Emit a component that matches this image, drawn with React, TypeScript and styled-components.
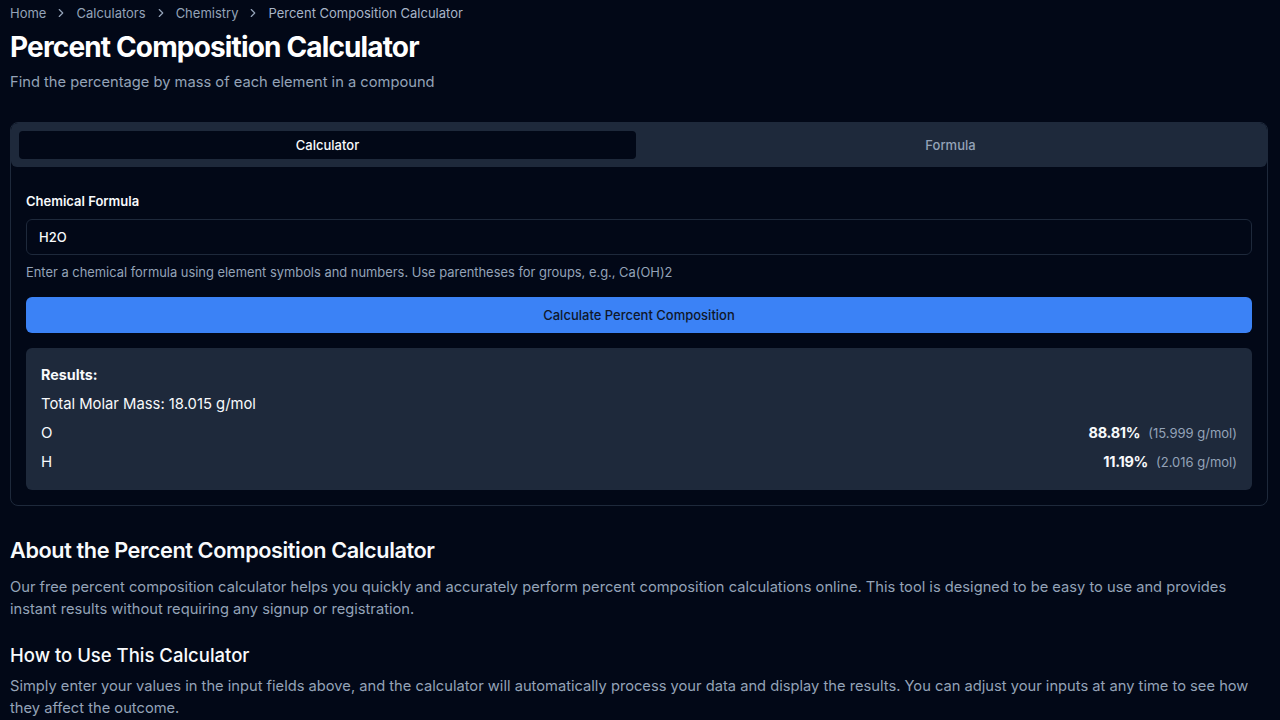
import styled, { createGlobalStyle } from 'styled-components';
import { ChevronRight } from 'lucide-react';

const GlobalStyle = createGlobalStyle`
  * { box-sizing: border-box; }
  body {
    margin: 0;
    background: #020817;
    color: #f8fafc;
    font-family: Inter, "Noto Sans", sans-serif;
  }
`;

const Page = styled.main`
  padding: 3px 12px 40px 10px;
`;

const Breadcrumb = styled.nav`
  display: flex;
  align-items: center;
  gap: 8px;
  font-size: 13px;
  line-height: 20px;
  color: #94a3b8;
`;

const Crumb = styled.span<{ $current?: boolean }>`
  color: ${(p) => (p.$current ? '#a8b5c8' : '#94a3b8')};
`;

const Sep = styled.span`
  display: inline-flex;
  color: #94a3b8;
`;

const Title = styled.h1`
  margin: 6px 0 0;
  font-size: 28px;
  line-height: 36px;
  font-weight: 700;
  letter-spacing: -0.85px;
  color: #fff;
`;

const Subtitle = styled.p`
  margin: 5px 0 0;
  font-size: 14.7px;
  line-height: 24px;
  color: #94a3b8;
`;

const Card = styled.section`
  margin-top: 28px;
  border: 1px solid #1e293b;
  border-radius: 8px;
  overflow: hidden;
`;

const TabList = styled.div`
  display: grid;
  grid-template-columns: 1fr 1fr;
  gap: 6px;
  padding: 8px;
  background: #1e293b;
  border-radius: 6px;
`;

const Tab = styled.button<{ $active?: boolean }>`
  height: 28px;
  border: 0;
  border-radius: 4px;
  font-family: inherit;
  font-size: 13px;
  font-weight: 500;
  background: ${(p) => (p.$active ? '#020817' : 'transparent')};
  color: ${(p) => (p.$active ? '#f8fafc' : '#94a3b8')};
`;

const Body = styled.div`
  padding: 24px 15px 15px;
  display: flex;
  flex-direction: column;
`;

const Label = styled.label`
  font-size: 13px;
  line-height: 20px;
  font-weight: 600;
  color: #f8fafc;
`;

const Input = styled.input`
  margin-top: 8px;
  height: 36px;
  padding: 0 12px;
  border: 1px solid #1e293b;
  border-radius: 6px;
  background: #020817;
  color: #f8fafc;
  font-family: inherit;
  font-size: 13px;
  font-weight: 500;
  outline: none;
`;

const Help = styled.p`
  margin: 9px 0 0;
  font-size: 12.9px;
  line-height: 18px;
  color: #94a3b8;
`;

const Button = styled.button`
  margin-top: 15px;
  height: 36px;
  border: 0;
  border-radius: 6px;
  background: #3b82f6;
  color: #0f172a;
  font-family: inherit;
  font-size: 13px;
  font-weight: 500;
`;

const Results = styled.div`
  margin-top: 15px;
  padding: 17px 15px 16px;
  background: #1e293b;
  border-radius: 6px;
  display: flex;
  flex-direction: column;
`;

const ResultsHead = styled.div`
  font-size: 14.3px;
  line-height: 20px;
  font-weight: 700;
`;

const Total = styled.div`
  margin-top: 7px;
  font-size: 14.8px;
  line-height: 24px;
`;

const Row = styled.div`
  display: flex;
  justify-content: space-between;
  align-items: center;
  margin-top: 5px;
  font-size: 15px;
  line-height: 24px;
`;

const Pct = styled.span`
  font-weight: 700;
  font-size: 14.5px;
  letter-spacing: -0.3px;
`;

const Mass = styled.span`
  margin-left: 8px;
  font-size: 13px;
  color: #94a3b8;
`;

const H2 = styled.h2`
  margin: 29px 0 0;
  font-size: 21.7px;
  line-height: 30px;
  font-weight: 600;
  letter-spacing: -0.4px;
`;

const H3 = styled.h3`
  margin: 22px 0 0;
  font-size: 18.5px;
  line-height: 26px;
  font-weight: 500;
`;

const Para = styled.p<{ $gap: number }>`
  margin: ${(p) => p.$gap}px 0 0;
  font-size: 14.7px;
  line-height: 22px;
  color: #94a3b8;
`;

const crumbs = ['Home', 'Calculators', 'Chemistry'];

const elements = [
  { sym: 'O', pct: '88.81%', mass: '(15.999 g/mol)' },
  { sym: 'H', pct: '11.19%', mass: '(2.016 g/mol)' },
];

export default function App() {
  return (
    <>
      <GlobalStyle />
      <Page>
        <Breadcrumb>
          {crumbs.map((c) => (
            <span key={c} style={{ display: 'contents' }}>
              <Crumb>{c}</Crumb>
              <Sep>
                <ChevronRight size={14} />
              </Sep>
            </span>
          ))}
          <Crumb $current>Percent Composition Calculator</Crumb>
        </Breadcrumb>
        <Title>Percent Composition Calculator</Title>
        <Subtitle>Find the percentage by mass of each element in a compound</Subtitle>

        <Card>
          <TabList>
            <Tab $active>Calculator</Tab>
            <Tab>Formula</Tab>
          </TabList>
          <Body>
            <Label>Chemical Formula</Label>
            <Input defaultValue="H2O" />
            <Help>
              Enter a chemical formula using element symbols and numbers. Use parentheses for groups, e.g., Ca(OH)2
            </Help>
            <Button>Calculate Percent Composition</Button>
            <Results>
              <ResultsHead>Results:</ResultsHead>
              <Total>Total Molar Mass: 18.015 g/mol</Total>
              {elements.map((e) => (
                <Row key={e.sym}>
                  <span>{e.sym}</span>
                  <span>
                    <Pct>{e.pct}</Pct>
                    <Mass>{e.mass}</Mass>
                  </span>
                </Row>
              ))}
            </Results>
          </Body>
        </Card>

        <H2>About the Percent Composition Calculator</H2>
        <Para $gap={11}>
          Our free percent composition calculator helps you quickly and accurately perform percent composition
          calculations online. This tool is designed to be easy to use and provides instant results without requiring
          any signup or registration.
        </Para>
        <H3>How to Use This Calculator</H3>
        <Para $gap={7}>
          Simply enter your values in the input fields above, and the calculator will automatically process your data
          and display the results. You can adjust your inputs at any time to see how they affect the outcome.
        </Para>
      </Page>
    </>
  );
}
